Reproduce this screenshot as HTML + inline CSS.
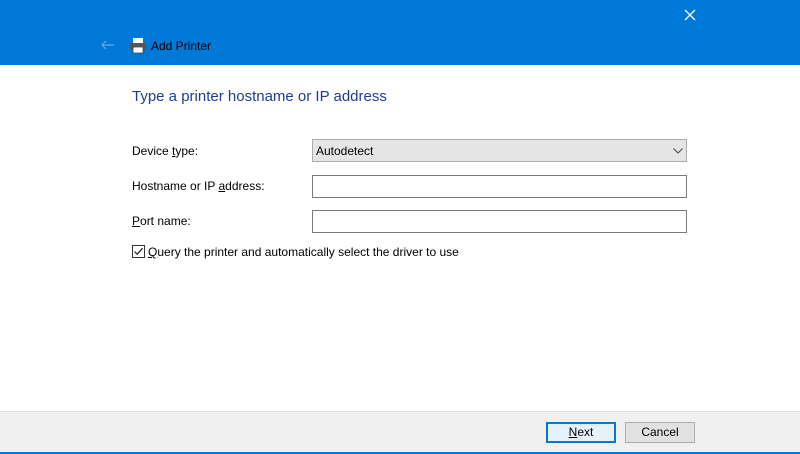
<!DOCTYPE html>
<html><head><style>
*{margin:0;padding:0;box-sizing:border-box}
body{width:800px;height:454px;overflow:hidden;background:#fff;font-family:"Liberation Sans",sans-serif;font-size:12px;color:#000;position:relative}
.top{position:absolute;left:0;top:0;width:800px;height:65px;background:#0078d7}
.a{position:absolute}
.lbl{position:absolute;left:132px;font-size:12px}
.box{position:absolute;left:312px;width:375px;height:23px;border:1px solid #7a7a7a;background:#fff}
.btn{position:absolute;top:422px;height:21px;width:70px;text-align:center;line-height:19px;font-size:12px;background:#e1e1e1;border:1px solid #adadad}
</style></head><body>
<div class="top">
<svg class="a" style="left:684px;top:9px" width="12" height="12"><path d="M1 1L11 11M11 1L1 11" stroke="#fff" stroke-width="1.3"/></svg>
<svg class="a" style="left:101px;top:40px" width="14" height="10"><path d="M1 5H13M5 1L1 5L5 9" stroke="#66a8e3" stroke-width="1.2" fill="none"/></svg>
<svg class="a" style="left:129px;top:37px" width="18" height="17"><rect x="4" y="1" width="10" height="5" fill="#fff"/><rect x="1" y="6" width="16" height="7" fill="#555"/><rect x="4" y="10" width="10" height="6" fill="#fff" stroke="#444" stroke-width="0.8"/></svg>
<div class="a" style="left:151px;top:39px;font-size:12px;color:#000">Add Printer</div>
</div>
<div class="a" style="left:132px;top:88px;font-size:15px;color:#1e3d8f">Type a printer hostname or IP address</div>
<div class="lbl" style="top:144px">Device <u>t</u>ype:</div>
<div class="lbl" style="top:179px">Hostname or IP <u>a</u>ddress:</div>
<div class="lbl" style="top:214px"><u>P</u>ort name:</div>
<div class="box" style="top:139px;background:#e5e5e5;border-color:#adadad;padding:4px 0 0 3px">Autodetect
<svg class="a" style="left:360px;top:8px" width="10" height="6"><path d="M0.5 0.5L5 5L9.5 0.5" stroke="#444" fill="none"/></svg></div>
<div class="box" style="top:175px"></div>
<div class="box" style="top:210px"></div>
<svg class="a" style="left:132px;top:245px" width="13" height="13"><rect x="0.5" y="0.5" width="12" height="12" fill="#fff" stroke="#333"/><path d="M2.5 6.5L5.2 9.2L10.5 3.2" stroke="#222" stroke-width="1.2" fill="none"/></svg>
<div class="a" style="left:148px;top:245px"><u>Q</u>uery the printer and automatically select the driver to use</div>
<div class="a" style="left:0;top:411px;width:800px;height:41px;background:#f0f0f0;border-top:1px solid #dfdfdf"></div>
<div class="a" style="left:0;top:452px;width:800px;height:2px;background:#0078d7"></div>
<div class="btn" style="left:546px;border:2px solid #0078d7;background:#e5f1fb;line-height:17px"><u>N</u>ext</div>
<div class="btn" style="left:625px">Cancel</div>
</body></html>
